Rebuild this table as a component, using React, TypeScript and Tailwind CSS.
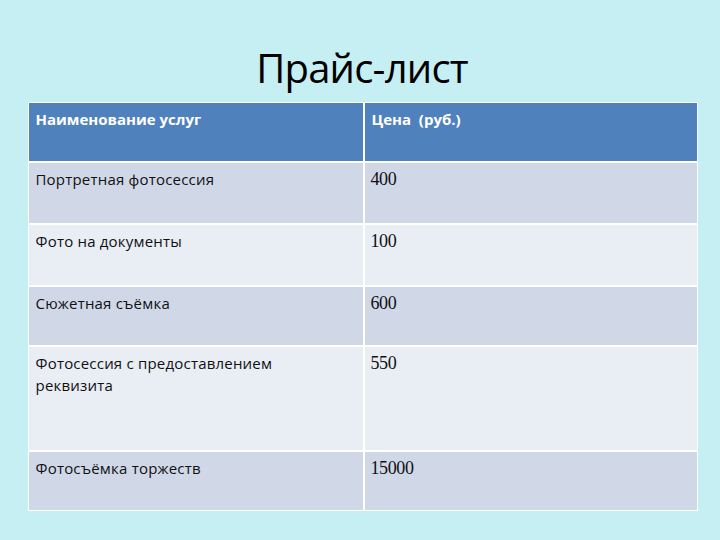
const ROWS: { name: string; price: string; h: string }[] = [
  { name: 'Портретная фотосессия', price: '400', h: 'h-[60px]' },
  { name: 'Фото на документы', price: '100', h: 'h-[60px]' },
  { name: 'Сюжетная съёмка', price: '600', h: 'h-[58px]' },
  { name: 'Фотосессия с предоставлением реквизита', price: '550', h: 'h-[103px]' },
  { name: 'Фотосъёмка торжеств', price: '15000', h: 'h-[58px]' },
]

export default function App() {
  return (
    <div className="flex h-[540px] w-[720px] flex-col items-center bg-[#c5eff3] font-['Open_Sans',sans-serif]">
      <h1 className="mt-[48px] ml-[4px] h-[54px] text-[40px] leading-none tracking-[-0.8px] text-black">Прайс-лист</h1>

      <div className="ml-[5px] w-[670px] border border-white bg-white">
        <div className="flex h-[58px] gap-[2px] bg-white">
          <div className="w-[334px] bg-[#4f81bd] px-[7px] pt-[5px] text-[15px] font-bold text-white">
            Наименование услуг
          </div>
          <div className="flex-1 bg-[#4f81bd] px-[7px] pt-[5px] text-[15px] font-bold text-white">
            Цена&nbsp; (руб.)
          </div>
        </div>
        {ROWS.map((r, i) => (
          <div key={r.name} className={`mt-[2px] flex gap-[2px] ${r.h}`}>
            <div className={`w-[334px] px-[7px] pt-[5px] text-[15px] leading-[22px] tracking-[0.2px] text-[#111] ${i % 2 === 0 ? 'bg-[#d0d8e8]' : 'bg-[#e9edf4]'}`}>
              <span className="block max-w-[280px]">{r.name}</span>
            </div>
            <div className={`flex-1 px-[6px] pt-[5px] font-['Liberation_Serif',serif] text-[18px] leading-[22px] tracking-[-0.4px] text-[#111] ${i % 2 === 0 ? 'bg-[#d0d8e8]' : 'bg-[#e9edf4]'}`}>
              {r.price}
            </div>
          </div>
        ))}
      </div>
    </div>
  )
}
